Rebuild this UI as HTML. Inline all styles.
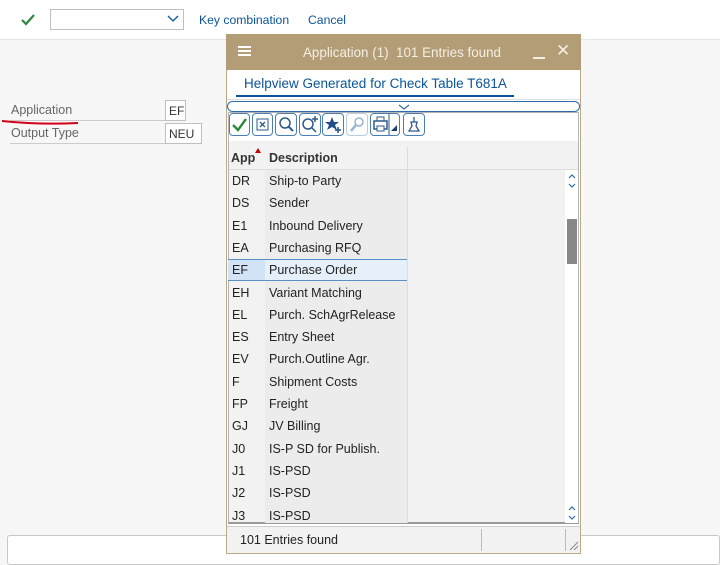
<!DOCTYPE html>
<html><head><meta charset="utf-8">
<style>
*{box-sizing:border-box;margin:0;padding:0}
body{width:720px;height:561px;overflow:hidden;background:#f7f7f7;font-family:"Liberation Sans",Arial,sans-serif;position:relative;font-size:13px;color:#333}
.abs{position:absolute}
.top{left:0;top:0;width:720px;height:40px;background:#fff;border-bottom:1px solid #e5e5e5}
.blue{color:#0a5499}
.btn{position:absolute;top:113px;height:23px;border:1px solid #4a7eb5;border-radius:4px;background:#fff}
.row{position:absolute;left:0;width:351px;height:22px;font-size:12.5px;color:#222}
.row span{position:absolute;top:4px}
</style></head><body>
<div class="abs top"></div>
<svg class="abs" style="left:20px;top:12px" width="16" height="16" viewBox="0 0 16 16"><path d="M2 8 L6 12 L14 3" stroke="#2b8a3e" stroke-width="2.2" fill="none"/></svg>
<div class="abs" style="left:50px;top:9px;width:134px;height:21px;border:1px solid #bfbfbf;background:#fff"></div>
<svg class="abs" style="left:167px;top:15px" width="12" height="8"><path d="M1 1 L6 6 L11 1" stroke="#0a5499" stroke-width="1.3" fill="none"/></svg>
<div class="abs blue" style="left:199px;top:13px;font-size:12.2px">Key combination</div>
<div class="abs blue" style="left:308px;top:13px;font-size:12.2px">Cancel</div>

<div class="abs" style="left:11px;top:103px;font-size:12.5px;color:#666">Application</div>
<div class="abs" style="left:10px;top:120px;width:155px;height:1px;background:#ccc"></div>
<svg class="abs" style="left:0;top:118px" width="80" height="8"><path d="M2 3 Q40 7 78 5" stroke="#d0021b" stroke-width="2" fill="none"/></svg>
<div class="abs" style="left:165px;top:100px;width:21px;height:21px;border:1px solid #bfbfbf;background:#fff;font-size:12px;padding:3px 0 0 3px">EF</div>
<div class="abs" style="left:11px;top:126px;font-size:12.5px;color:#666">Output Type</div>
<div class="abs" style="left:10px;top:143px;width:155px;height:1px;background:#ccc"></div>
<div class="abs" style="left:165px;top:123px;width:37px;height:21px;border:1px solid #bfbfbf;background:#fff;font-size:12px;padding:3px 0 0 3px">NEU</div>

<div class="abs" style="left:7px;top:535px;width:713px;height:30px;background:#fff;border:1px solid #c8c8c8;border-radius:3px"></div>

<!-- popup -->
<div class="abs" style="left:226px;top:34px;width:355px;height:520px;background:#fff;border:1px solid #b9aa8c"></div>
<div class="abs" style="left:226px;top:34px;width:355px;height:36px;background:#b29d77"></div>
<div class="abs" style="left:238px;top:46px;width:13px;height:2px;background:#fff;box-shadow:0 4px 0 #fff,0 8px 0 #fff"></div>
<div class="abs" style="left:303px;top:45px;font-size:13.4px;color:#f5efe2">Application (1)&nbsp; 101 Entries found</div>
<div class="abs" style="left:533px;top:57px;width:12px;height:2px;background:#f5efe2"></div>
<div class="abs" style="left:556px;top:41px;font-size:17px;color:#f5efe2">✕</div>
<div class="abs blue" style="left:244px;top:76px;font-size:13.5px">Helpview Generated for Check Table T681A</div>
<div class="abs" style="left:236px;top:95px;width:278px;height:2px;background:#0a5499"></div>
<div class="abs" style="left:227px;top:99px;width:353px;height:1px;background:#e0e0e0"></div>
<div class="abs" style="left:227px;top:101px;width:353px;height:11px;border:1px solid #2e6aa8;border-radius:6px"></div>
<svg class="abs" style="left:398px;top:104px" width="12" height="7"><path d="M1 1 L6 5 L11 1" stroke="#2e6aa8" stroke-width="1.2" fill="none"/></svg>
<div class="abs" style="left:228px;top:112px;width:351px;height:412px;border:1px solid #b5b5b5;border-bottom:2px solid #999;background:#f2f2f2"></div>
<div class="abs" style="left:229px;top:113px;width:349px;height:28px;background:#fff"></div>
<div class="btn" style="left:229px;width:21px"><svg width="19" height="21"><path d="M3 11 L8 16 L16 5" stroke="#2b8a3e" stroke-width="2.4" fill="none"/></svg></div>
<div class="btn" style="left:252px;width:21px"><svg width="19" height="21"><rect x="4" y="5" width="11" height="11" stroke="#2e5a8a" fill="none"/><path d="M7 8 L12 13 M12 8 L7 13" stroke="#2e5a8a" stroke-width="1.3"/></svg></div>
<div class="btn" style="left:275px;width:22px"><svg width="20" height="21"><circle cx="9" cy="9" r="5" stroke="#2e5a8a" stroke-width="1.5" fill="none"/><path d="M12.5 12.5 L17 17" stroke="#2e5a8a" stroke-width="2"/></svg></div>
<div class="btn" style="left:299px;width:22px"><svg width="20" height="21"><circle cx="8" cy="10" r="5" stroke="#2e5a8a" stroke-width="1.5" fill="none"/><path d="M11.5 13.5 L16 18 M15 2 V8 M12 5 H18" stroke="#2e5a8a" stroke-width="1.5"/></svg></div>
<div class="btn" style="left:322px;width:22px"><svg width="20" height="21"><path d="M9 3 L11 8 L16 8 L12 11 L14 16 L9 13 L4 16 L6 11 L2 8 L7 8Z" fill="#1f4f86"/><path d="M15 13 V19 M12 16 H18" stroke="#1f4f86" stroke-width="1.5"/></svg></div>
<div class="btn" style="left:346px;width:22px;border-color:#b7cde3"><svg width="20" height="21"><circle cx="12" cy="8" r="4" stroke="#9ab3cf" stroke-width="1.5" fill="none"/><path d="M9 11 L4 17" stroke="#9ab3cf" stroke-width="2.5"/></svg></div>
<div class="btn" style="left:370px;width:30px"><svg width="28" height="21"><rect x="3" y="7" width="13" height="8" stroke="#2e5a8a" stroke-width="1.5" fill="none"/><rect x="6" y="3" width="7" height="4" stroke="#2e5a8a" fill="none"/><rect x="6" y="12" width="7" height="5" fill="#fff" stroke="#2e5a8a"/><path d="M18 0 V21" stroke="#2e5a8a"/><path d="M20 17 L26 17 L26 11Z" fill="#1f3f66"/></svg></div>
<div class="btn" style="left:403px;width:22px"><svg width="20" height="21"><path d="M10 3 V8 M7 8 H13 L12 12 L15 17 H5 L8 12Z" stroke="#2e5a8a" stroke-width="1.3" fill="none"/></svg></div>

<div class="abs" style="left:229px;top:141px;width:349px;height:29px;background:#f2f2f2;border-bottom:1px solid #ddd"></div>
<div class="abs" style="left:407px;top:147px;width:1px;height:376px;background:#ddd"></div>
<div class="abs" style="left:265px;top:170px;width:142px;height:353px;background:#ececec"></div>
<div class="abs" style="left:231px;top:151px;font-weight:bold;font-size:12.5px">App</div>
<div class="abs" style="left:255px;top:148px;width:0;height:0;border-left:3px solid transparent;border-right:3px solid transparent;border-bottom:5px solid #c00"></div>
<div class="abs" style="left:269px;top:151px;font-weight:bold;font-size:12.5px">Description</div>
<div class="abs" style="left:565px;top:170px;width:13px;height:353px;background:#fff"></div>
<div class="abs" style="left:567px;top:219px;width:10px;height:45px;background:#888"></div>
<svg class="abs" style="left:567px;top:173px" width="10" height="16"><path d="M2 5 L5 2 L8 5 M2 11 L5 14 L8 11" stroke="#2e6aa8" stroke-width="1.2" fill="none"/></svg>
<svg class="abs" style="left:567px;top:505px" width="10" height="16"><path d="M2 5 L5 2 L8 5 M2 11 L5 14 L8 11" stroke="#2e6aa8" stroke-width="1.2" fill="none"/></svg>

<div class="abs" style="left:228px;top:170px;width:351px">
<div class="row" style="top:0"><span style="left:4px">DR</span><span style="left:41px">Ship-to Party</span></div>
<div class="row" style="top:22.3px"><span style="left:4px">DS</span><span style="left:41px">Sender</span></div>
<div class="row" style="top:44.6px"><span style="left:4px">E1</span><span style="left:41px">Inbound Delivery</span></div>
<div class="row" style="top:66.9px"><span style="left:4px">EA</span><span style="left:41px">Purchasing RFQ</span></div>
<div class="row" style="top:88.5px;width:179px;background:#e5f0fa;border-top:1px solid #5b8fc7;border-bottom:1px solid #5b8fc7"><div style="position:absolute;left:0;top:0;width:37px;height:20px;background:#d1e3f4"></div><span style="left:4px;top:3px">EF</span><span style="left:41px;top:3px">Purchase Order</span></div>
<div class="row" style="top:111.5px"><span style="left:4px">EH</span><span style="left:41px">Variant Matching</span></div>
<div class="row" style="top:133.8px"><span style="left:4px">EL</span><span style="left:41px">Purch. SchAgrRelease</span></div>
<div class="row" style="top:156.1px"><span style="left:4px">ES</span><span style="left:41px">Entry Sheet</span></div>
<div class="row" style="top:178.4px"><span style="left:4px">EV</span><span style="left:41px">Purch.Outline Agr.</span></div>
<div class="row" style="top:200.7px"><span style="left:4px">F</span><span style="left:41px">Shipment Costs</span></div>
<div class="row" style="top:223px"><span style="left:4px">FP</span><span style="left:41px">Freight</span></div>
<div class="row" style="top:245.3px"><span style="left:4px">GJ</span><span style="left:41px">JV Billing</span></div>
<div class="row" style="top:267.6px"><span style="left:4px">J0</span><span style="left:41px">IS-P SD for Publish.</span></div>
<div class="row" style="top:289.9px"><span style="left:4px">J1</span><span style="left:41px">IS-PSD</span></div>
<div class="row" style="top:312.2px"><span style="left:4px">J2</span><span style="left:41px">IS-PSD</span></div>
<div class="row" style="top:334.5px"><span style="left:4px">J3</span><span style="left:41px">IS-PSD</span></div>
</div>

<div class="abs" style="left:227px;top:526px;width:353px;height:27px;background:#f2f2f2;border-top:1px solid #ccc"></div>
<div class="abs" style="left:240px;top:533px;font-size:12.5px;color:#222">101 Entries found</div>
<div class="abs" style="left:481px;top:529px;width:1px;height:22px;background:#bbb"></div>
<div class="abs" style="left:565px;top:529px;width:1px;height:22px;background:#bbb"></div>
<svg class="abs" style="left:569px;top:541px" width="10" height="10"><path d="M9 1 L1 9 M9 5 L5 9" stroke="#888"/></svg>
</body></html>
